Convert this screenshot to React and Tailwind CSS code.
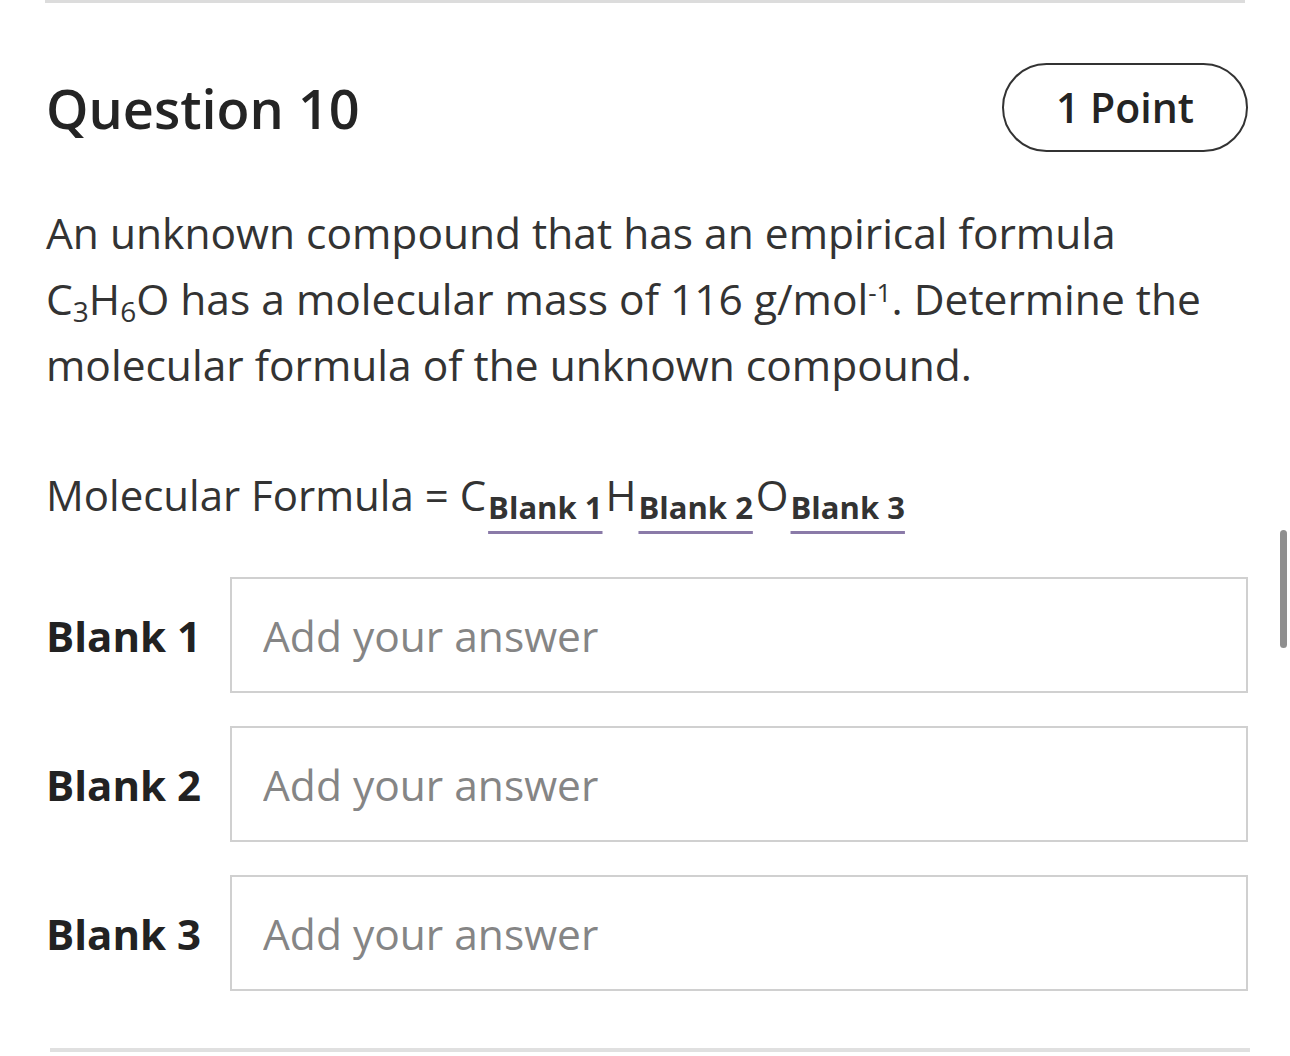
export default function App() {
  const blanks = ['Blank 1', 'Blank 2', 'Blank 3'];

  return (
    <div
      className="relative w-[1290px] h-[1056px] overflow-hidden bg-white text-[#242424]"
      style={{ fontFamily: '"Open Sans", "Noto Sans", sans-serif' }}
    >
      <div className="mx-[45px] h-[3px] bg-[#dcdcdc]" />

      <div className="px-[46px] pr-[42px]">
        <div className="flex items-center justify-between mt-[60px]">
          <h2 className="text-[54px] font-semibold leading-none">Question 10</h2>
          <div className="flex items-center justify-center w-[246px] h-[89px] rounded-full border-2 border-[#333] text-[41px] font-semibold">
            1 Point
          </div>
        </div>

        <p className="mt-[48px] text-[42.5px] leading-[66px] text-[#333]">
          An unknown compound that has an empirical formula
          <br />
          C<sub className="text-[28px]">3</sub>H<sub className="text-[28px]">6</sub>O has a molecular mass of 116 g/mol
          <sup className="text-[26px]">-1</sup>. Determine the
          <br />
          molecular formula of the unknown compound.
        </p>

        <div className="mt-[72px] flex items-baseline text-[42px] leading-[50px] text-[#333]">
          <span>Molecular Formula = C</span>
          {['Blank 1', 'Blank 2', 'Blank 3'].map((b, i) => (
            <span key={b} className="flex items-baseline">
              <span className="relative top-[8px] ml-[2px] text-[31px] font-bold text-[#333] underline decoration-[#8a7aa8] decoration-[3px] underline-offset-[12px]">
                {b}
              </span>
              {i < 2 && <span className="ml-[3px]">{i === 0 ? 'H' : 'O'}</span>}
            </span>
          ))}
        </div>

        <div className="mt-[53px] flex flex-col gap-[33px]">
          {blanks.map((b) => (
            <div key={b} className="flex items-center">
              <label className="w-[184px] text-[42px] font-bold text-[#222]">{b}</label>
              <input
                type="text"
                placeholder="Add your answer"
                className="flex-1 h-[116px] border-2 border-[#d0d0d0] px-[31px] text-[42.5px] text-[#333] placeholder-[#858585] outline-none"
                style={{ fontFamily: '"Open Sans", "Noto Sans", sans-serif' }}
              />
            </div>
          ))}
        </div>
      </div>

      <div className="absolute left-[50px] right-[40px] top-[1048px] h-[4px] bg-[#e0e0e0]" />
      <div className="absolute left-[1280px] top-[530px] w-[7px] h-[118px] rounded-full bg-[#8f8f8f]" />
    </div>
  );
}
